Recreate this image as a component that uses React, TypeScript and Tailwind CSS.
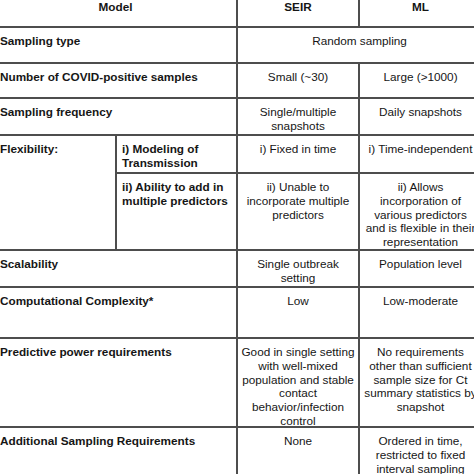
const lab = "bg-white pl-[5px] pt-[6px] font-bold";
const val = "bg-white pt-[6px] text-center whitespace-nowrap";

function Lines({ items }: { items: string[] }) {
  return (
    <>
      {items.map((t, i) => (
        <div key={i}>{t}</div>
      ))}
    </>
  );
}

export default function App() {
  return (
    <div className="w-[474px] h-[474px] overflow-hidden bg-white">
      <div className="-mt-[5px] -ml-[5px] w-max grid grid-cols-[120px_119px_120px_121px] grid-rows-[31px_34px_33px_35px_36px_75px_35px_49px_87px_60px] gap-[2px] bg-[#4d4d4d] text-[11.75px] leading-[13.75px] text-[#161616] font-['Liberation_Sans',Arial,sans-serif]">
        <div className="col-span-2 bg-white pt-[5px] text-center font-bold">Model</div>
        <div className="bg-white pt-[5px] text-center font-bold">SEIR</div>
        <div className="bg-white pt-[5px] text-center font-bold">ML</div>

        <div className={`col-span-2 ${lab}`}>Sampling type</div>
        <div className={`col-span-2 ${val}`}>Random sampling</div>

        <div className={`col-span-2 ${lab}`}>Number of COVID-positive samples</div>
        <div className={val}>Small (~30)</div>
        <div className={val}>Large (&gt;1000)</div>

        <div className={`col-span-2 ${lab}`}>Sampling frequency</div>
        <div className={val}>
          <Lines items={["Single/multiple", "snapshots"]} />
        </div>
        <div className={val}>Daily snapshots</div>

        <div className={`row-span-2 ${lab} pt-[5px]`}>Flexibility:</div>
        <div className={`${lab} pt-[5px]`}>
          <Lines items={["i) Modeling of", "Transmission"]} />
        </div>
        <div className={`${val} pt-[5px]`}>i) Fixed in time</div>
        <div className={`${val} pt-[5px]`}>i) Time-independent</div>

        <div className={lab}>
          <Lines items={["ii) Ability to add in", "multiple predictors"]} />
        </div>
        <div className={val}>
          <Lines items={["ii) Unable to", "incorporate multiple", "predictors"]} />
        </div>
        <div className={val}>
          <Lines
            items={[
              "ii) Allows",
              "incorporation of",
              "various predictors",
              "and is flexible in their",
              "representation",
            ]}
          />
        </div>

        <div className={`col-span-2 ${lab}`}>Scalability</div>
        <div className={val}>
          <Lines items={["Single outbreak", "setting"]} />
        </div>
        <div className={val}>Population level</div>

        <div className={`col-span-2 ${lab}`}>Computational Complexity*</div>
        <div className={val}>Low</div>
        <div className={val}>Low-moderate</div>

        <div className={`col-span-2 ${lab}`}>Predictive power requirements</div>
        <div className={val}>
          <Lines
            items={[
              "Good in single setting",
              "with well-mixed",
              "population and stable",
              "contact",
              "behavior/infection",
              "control",
            ]}
          />
        </div>
        <div className={val}>
          <Lines
            items={[
              "No requirements",
              "other than sufficient",
              "sample size for Ct",
              "summary statistics by",
              "snapshot",
            ]}
          />
        </div>

        <div className={`col-span-2 ${lab}`}>Additional Sampling Requirements</div>
        <div className={val}>None</div>
        <div className={val}>
          <Lines items={["Ordered in time,", "restricted to fixed", "interval sampling"]} />
        </div>
      </div>
    </div>
  );
}
